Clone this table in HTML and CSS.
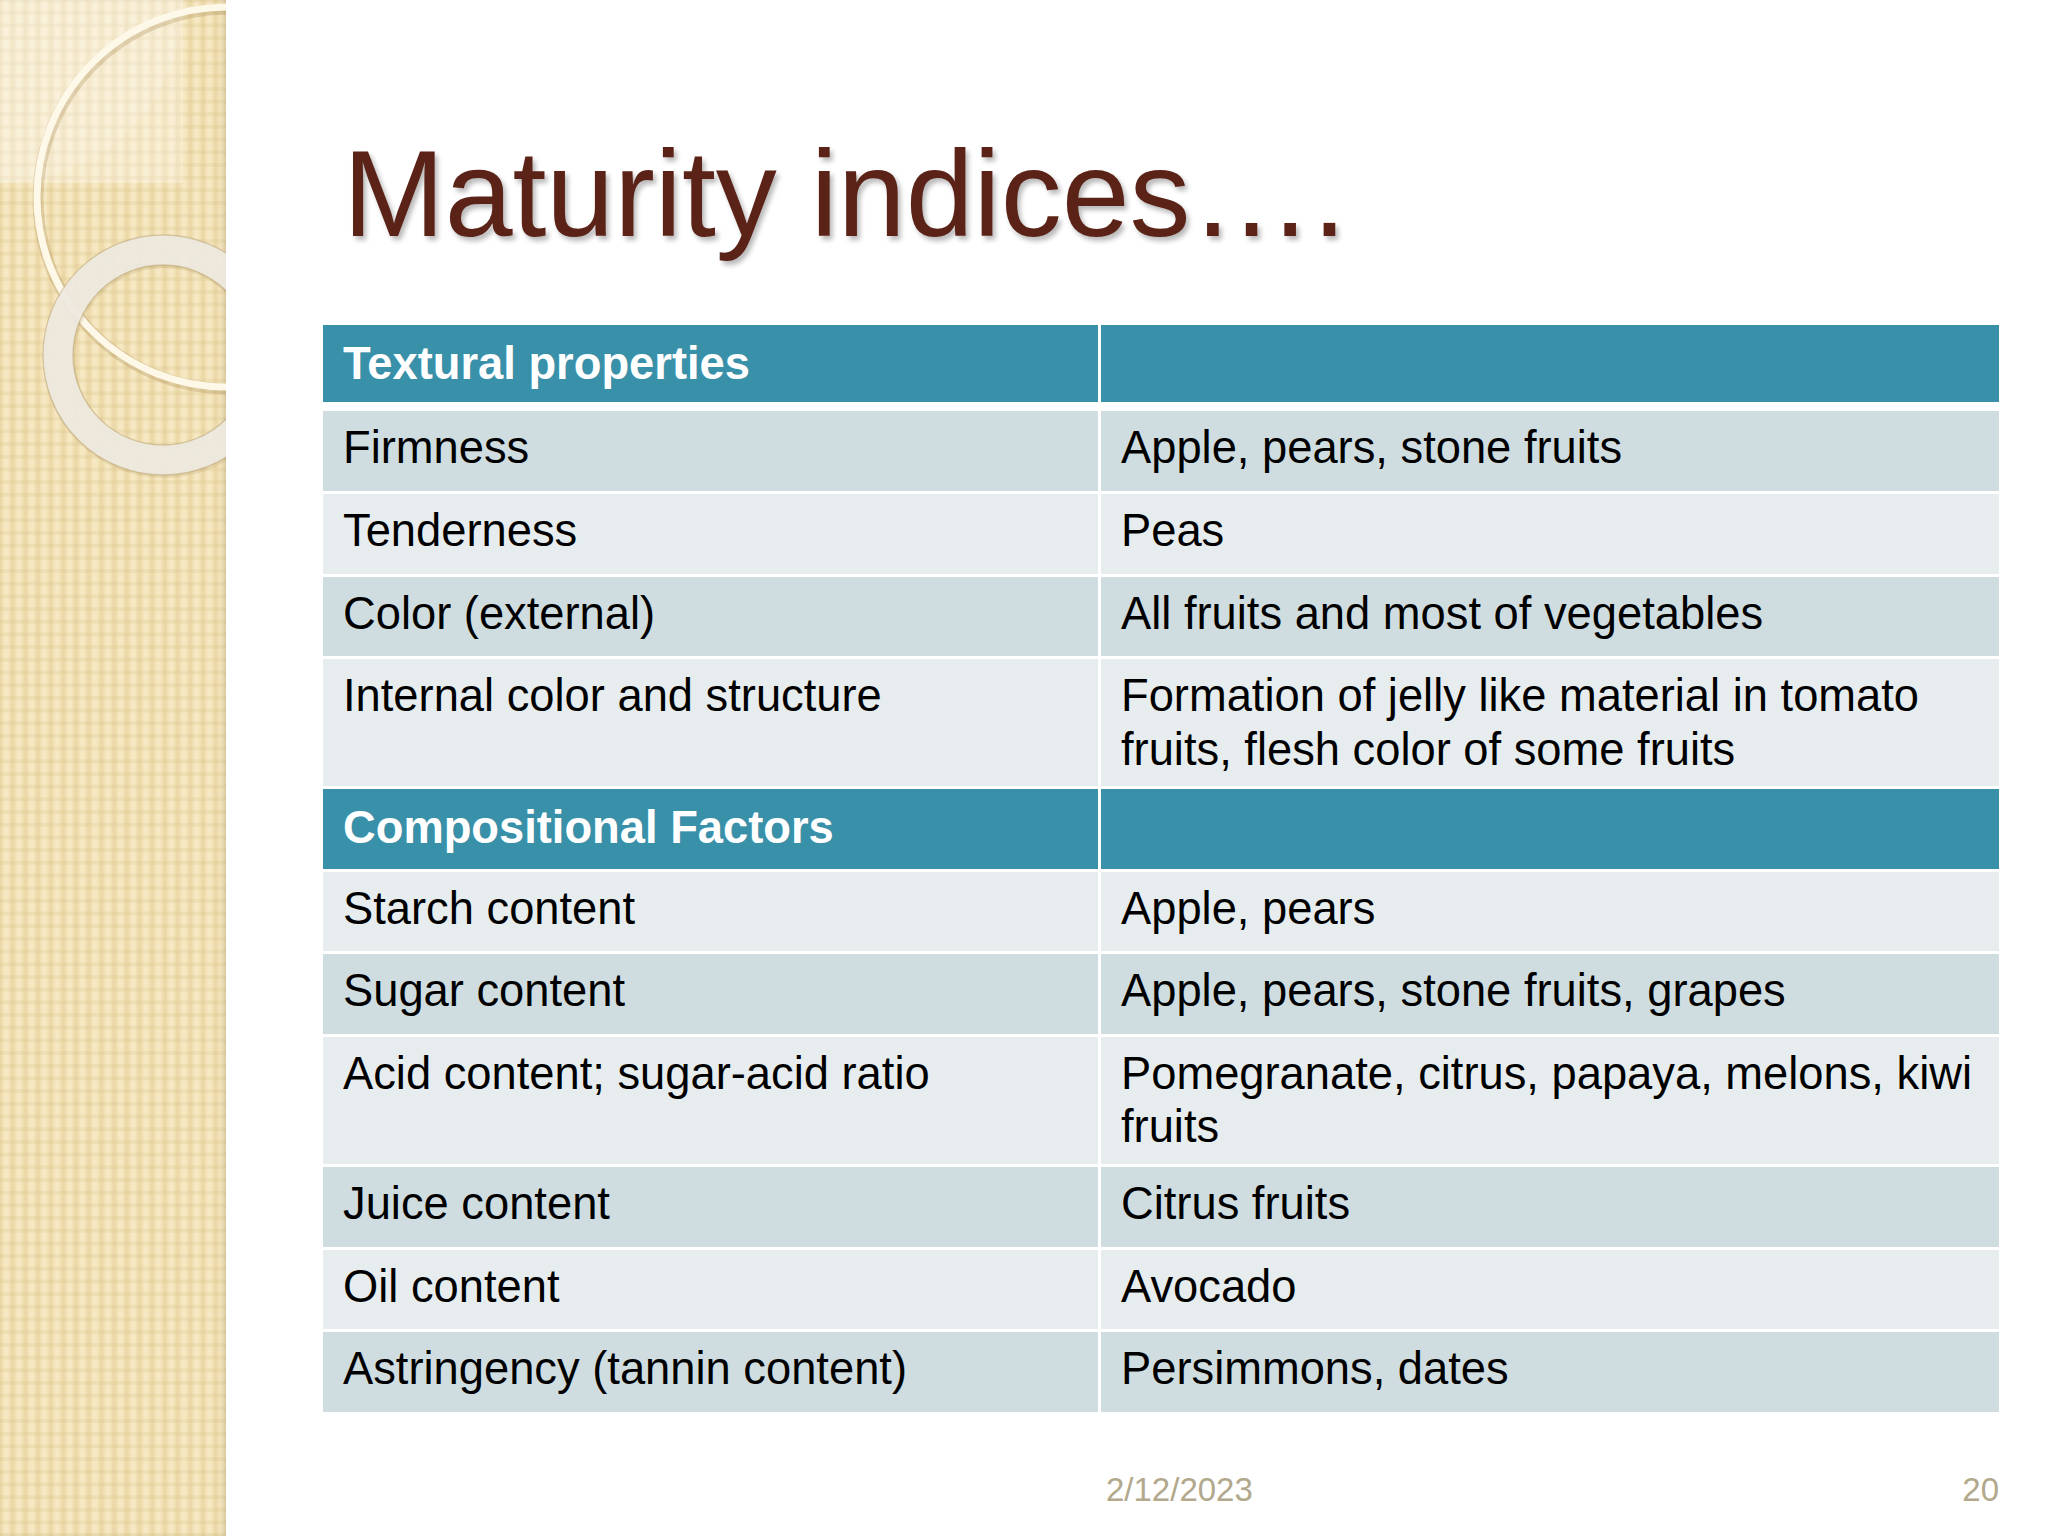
FILE: index.html
```html
<!DOCTYPE html>
<html lang="en">
<head>
<meta charset="utf-8">
<title>Maturity indices</title>
<link rel="stylesheet" href="styles.css">
</head>
<body>
<div class="slide">
  <aside class="sidebar">
    <svg class="deco" width="226" height="1536" viewBox="0 0 226 1536" xmlns="http://www.w3.org/2000/svg">
      <rect x="0" y="0" width="183" height="183" fill="#ffffff" fill-opacity="0.3"/>
      <path d="M0 0 L183 0 A183 183 0 0 1 0 183 Z" fill="#ffffff" fill-opacity="0.12"/>
      <circle cx="228" cy="199" r="190" fill="none" stroke="#a88a52" stroke-opacity="0.3" stroke-width="11"/>
      <circle cx="227" cy="197" r="190" fill="none" stroke="#fdf8e8" stroke-width="7"/>
      <circle cx="164" cy="357" r="105" fill="none" stroke="#a88a52" stroke-opacity="0.18" stroke-width="32"/>
      <circle cx="163" cy="355" r="105" fill="none" stroke="#eeeae1" stroke-opacity="0.92" stroke-width="30"/>
      <circle cx="163" cy="355" r="120" fill="none" stroke="#b39a66" stroke-opacity="0.45" stroke-width="1.3"/>
      <circle cx="163" cy="355" r="90" fill="none" stroke="#b39a66" stroke-opacity="0.45" stroke-width="1.3"/>
    </svg>
  </aside>
  <main class="content">
    <h1 class="title">Maturity indices….</h1>
    <table class="indices">
      <colgroup><col class="c1"><col class="c2"></colgroup>
      <tbody>
        <tr class="head first"><td>Textural properties</td><td></td></tr>
        <tr class="dark"><td>Firmness</td><td>Apple, pears, stone fruits</td></tr>
        <tr class="light"><td>Tenderness</td><td>Peas</td></tr>
        <tr class="dark"><td>Color (external)</td><td>All fruits and most of vegetables</td></tr>
        <tr class="light multi"><td>Internal color and structure</td><td>Formation of jelly like material in tomato fruits, flesh color of some fruits</td></tr>
        <tr class="head"><td>Compositional Factors</td><td></td></tr>
        <tr class="light"><td>Starch content</td><td>Apple, pears</td></tr>
        <tr class="dark"><td>Sugar content</td><td>Apple, pears, stone fruits, grapes</td></tr>
        <tr class="light multi"><td>Acid content; sugar-acid ratio</td><td>Pomegranate, citrus, papaya, melons, kiwi fruits</td></tr>
        <tr class="dark"><td>Juice content</td><td>Citrus fruits</td></tr>
        <tr class="light"><td>Oil content</td><td>Avocado</td></tr>
        <tr class="dark"><td>Astringency (tannin content)</td><td>Persimmons, dates</td></tr>
      </tbody>
    </table>
    <footer class="footer">
      <span class="date">2/12/2023</span>
      <span class="num">20</span>
    </footer>
  </main>
</div>
</body>
</html>
```
FILE: styles.css
```css
html, body {
  margin: 0;
  padding: 0;
  background: #ffffff;
}

.slide {
  display: flex;
  width: 2048px;
  height: 1536px;
  overflow: hidden;
  font-family: "Liberation Sans", Arial, sans-serif;
}

.sidebar {
  flex: 0 0 226px;
  width: 226px;
  height: 1536px;
  overflow: hidden;
  background-color: #f2e1b5;
  background-image:
    linear-gradient(90deg, rgba(0,0,0,0) 219px, rgba(150,130,90,0.14) 226px),
    linear-gradient(90deg, rgba(214,190,132,0.22) 2px, rgba(0,0,0,0) 2px, rgba(0,0,0,0) 11px, rgba(214,190,132,0.22) 11px),
    linear-gradient(rgba(214,190,132,0.22) 2px, rgba(0,0,0,0) 2px, rgba(0,0,0,0) 11px, rgba(214,190,132,0.22) 11px),
    linear-gradient(90deg, rgba(255,248,225,0) 4px, rgba(255,248,225,0.3) 4px, rgba(255,248,225,0.3) 9px, rgba(255,248,225,0) 9px);
  background-size: 226px 1536px, 12.7px 12.7px, 12.7px 12.7px, 12.7px 12.7px;
  box-shadow: inset -3px 0 5px rgba(120,100,60,0.1);
}

.deco {
  display: block;
}

.content {
  flex: 1 1 auto;
  padding: 124px 49px 0 97px;
}

.title {
  margin: 0;
  padding-left: 20px;
  font-family: "Liberation Sans", Arial, sans-serif;
  font-weight: normal;
  font-size: 122px;
  line-height: 140px;
  height: 140px;
  color: #5b2317;
  text-shadow: 3px 4px 5px rgba(0,0,0,0.28);
  white-space: nowrap;
}

.indices {
  margin-top: 61px;
  width: 1676px;
  table-layout: fixed;
  border-collapse: separate;
  border-spacing: 0;
}

.indices col.c1 { width: 778px; }
.indices col.c2 { width: 898px; }

.indices td {
  padding: 10px 20px;
  vertical-align: top;
  font-size: 45.3px;
  line-height: 53.5px;
  color: #000000;
  border-bottom: 3px solid #ffffff;
}

.indices td:first-child {
  border-right: 3px solid #ffffff;
}

.indices tr { height: 82.6px; }

.indices tr.head td {
  background: #3990a9;
  color: #ffffff;
  font-weight: bold;
  padding-top: 12px;
}

.indices tr.head.first { height: 86.4px; }
.indices tr.head.first td { border-bottom-width: 9px; }

.indices tr.dark td { background: #cfdde1; }
.indices tr.light td { background: #e7edee; }

.footer {
  display: flex;
  justify-content: space-between;
  margin-top: 55px;
  padding-left: 783px;
  font-size: 33px;
  line-height: 40px;
  color: #b2a88c;
}
```
